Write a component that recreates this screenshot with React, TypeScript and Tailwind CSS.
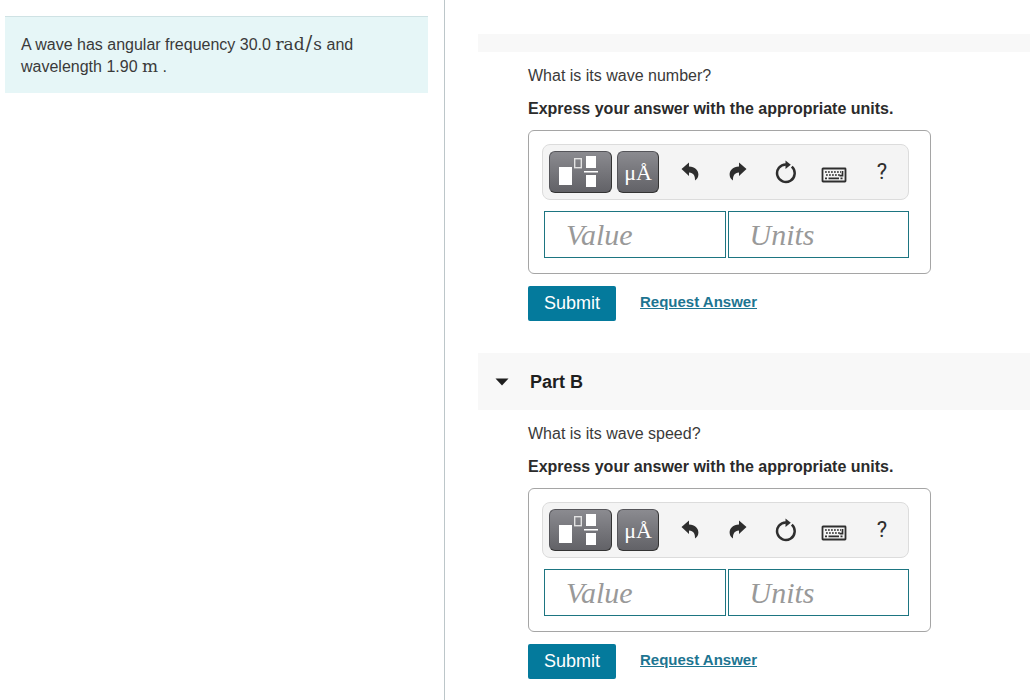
import React, { FC } from 'react';

interface AnswerPartProps {
  id: string;
  question: string;
}

const UndoIcon: FC = () => (
  <svg width="18" height="20" viewBox="0 0 18 20" fill="currentColor" aria-hidden="true">
    <path d="M0.5 7 8 0.5V4.4C14 4.6 17.4 8 17.4 12.6C17.4 15.2 16.2 17.2 14 18.6C14.2 14 12.6 10.8 8 10.6V14Z" />
  </svg>
);

const RedoIcon: FC = () => (
  <svg width="18" height="20" viewBox="0 0 18 20" fill="currentColor" aria-hidden="true">
    <path d="M17.5 7 10 0.5V4.4C4 4.6 0.6 8 0.6 12.6C0.6 15.2 1.8 17.2 4 18.6C3.8 14 5.4 10.8 10 10.6V14Z" />
  </svg>
);

const ResetIcon: FC = () => (
  <svg width="22" height="24" viewBox="0 0 22 24" aria-hidden="true">
    <path d="M16.8 6.7A8.8 8.8 0 1 1 11 4.4" fill="none" stroke="currentColor" strokeWidth="2.5" />
    <path d="M10.5 0.5 15.8 4.8 10.5 9Z" fill="currentColor" />
  </svg>
);

const KeyboardIcon: FC = () => (
  <svg width="26" height="22" viewBox="0 -6 26 22" aria-hidden="true">
    <rect x="1.5" y="1.5" width="23" height="13" rx="0.5" fill="none" stroke="currentColor" strokeWidth="1.8" />
    <path d="M4 5H20M5 8H19" fill="none" stroke="currentColor" strokeWidth="1.7" strokeDasharray="1.8 1.2" />
    <path d="M21.5 4V8.6H18.5M4 11.3H6M7.5 11.3H18M19.5 11.3H21.5" fill="none" stroke="currentColor" strokeWidth="1.7" />
  </svg>
);

const TemplateIcon: FC = () => (
  <svg width="61" height="40" viewBox="0 0 61 40" aria-hidden="true">
    <path d="M9 15H22V33H9ZM36 4H46V16H36ZM34 19H48V20.6H34ZM36 23H46V35H36Z" fill="#fff" />
    <rect x="24.7" y="6.7" width="6.6" height="9" fill="none" stroke="#e2e2e2" strokeWidth="1.4" />
  </svg>
);

const tools = [
  { label: 'Undo', icon: <UndoIcon /> },
  { label: 'Redo', icon: <RedoIcon /> },
  { label: 'Reset', icon: <ResetIcon /> },
  { label: 'Keyboard shortcuts', icon: <KeyboardIcon /> },
  { label: 'Help', icon: <span className="font-[Roboto,sans-serif] text-[22px] leading-6">?</span> },
];

const inputStyle =
  'h-[47px] w-0 min-w-0 flex-1 border border-[#1d7581] bg-white px-[21px] font-["Liberation_Serif",serif] text-[30px] text-[#333] italic placeholder:text-[#999]';
const darkButton =
  'h-[42px] shrink-0 rounded-md border border-[#55555a] border-r-[#333] border-b-[#333] bg-linear-to-b from-[#8b8b90] to-[#626267] text-white';
const unitStyle = 'font-["DejaVu_Serif",serif] text-[17px] leading-none';

const AnswerPart: FC<AnswerPartProps> = ({ id, question }) => (
  <div className="flex flex-col pt-[13px] pb-8 pl-[50px]">
    <p className="leading-[22px]">{question}</p>
    <p className="mt-[11px] leading-[22px] font-bold text-[#2b2b2b]">Express your answer with the appropriate units.</p>
    <div className="mt-2.5 w-full max-w-[403px] rounded-md border border-[#a5a5a5] pt-[13px] pr-[21px] pb-[15px] pl-[13px]">
      <div className="flex items-center rounded-lg border border-[#dcdcdc] bg-[#f4f4f4] py-1.5 pl-1.5 text-[#2e2e2e]">
        <button type="button" aria-label="Templates" className={`${darkButton} mr-[5px] w-[63px]`}>
          <TemplateIcon />
        </button>
        <button
          type="button"
          aria-label="Symbols"
          className={`${darkButton} mr-[7px] w-[42px] font-["Liberation_Serif",serif] text-[22px]`}
        >
          μÅ
        </button>
        {tools.map(({ label, icon }) => (
          <button key={label} type="button" aria-label={label} className="flex w-12 items-center justify-center">
            {icon}
          </button>
        ))}
      </div>
      <div className="mt-[11px] ml-0.5 flex gap-0.5">
        <input id={`${id}_value`} aria-label="Value" placeholder="Value" className={inputStyle} />
        <input id={`${id}_units`} aria-label="Units" placeholder="Units" className={inputStyle} />
      </div>
    </div>
    <div className="mt-3 flex items-center">
      <button type="button" className="h-[35px] rounded-xs bg-[#047a9c] px-4 pb-0.5 text-lg text-white">
        Submit
      </button>
      <a href="#answer" className="ml-6 pb-0.5 text-[15px] font-bold text-[#1d7591] underline">
        Request Answer
      </a>
    </div>
  </div>
);

const App: FC = () => (
  <div className='flex min-h-screen bg-white font-["Liberation_Sans",Arial,sans-serif] text-base text-[#3a3a3a]'>
    <aside className="w-[445px] shrink-0 border-r border-[#bcc6c9] pt-4 pr-4 pl-[5px]">
      <p className="border-t border-[#cfe2e4] bg-[#e6f6f7] px-4 pt-4 pb-[15px] leading-[22px]">
        A wave has angular frequency 30.0 <span className={unitStyle}>rad</span>
        <span className='mx-px font-["DejaVu_Serif",serif] text-xl leading-none'>/</span>
        <span className={unitStyle}>s</span> and wavelength 1.90 <span className={unitStyle}>m</span> .
      </p>
    </aside>
    <main className="min-w-0 flex-1 pt-[34px] pl-[33px]">
      <div className="h-[18px] bg-[#f8f8f8]" />
      <AnswerPart id="part_a" question="What is its wave number?" />
      <button type="button" className="flex h-[57px] w-full items-center bg-[#f8f8f8] pl-[17px] text-left">
        <svg width="14" height="8" viewBox="0 0 14 8" aria-hidden="true">
          <path d="M0.5 0.5H13.5L7 7.5Z" fill="#1f1f1f" />
        </svg>
        <span className="ml-[21px] text-lg font-bold text-[#1f1f1f]">Part B</span>
      </button>
      <AnswerPart id="part_b" question="What is its wave speed?" />
    </main>
  </div>
);

export default App;
